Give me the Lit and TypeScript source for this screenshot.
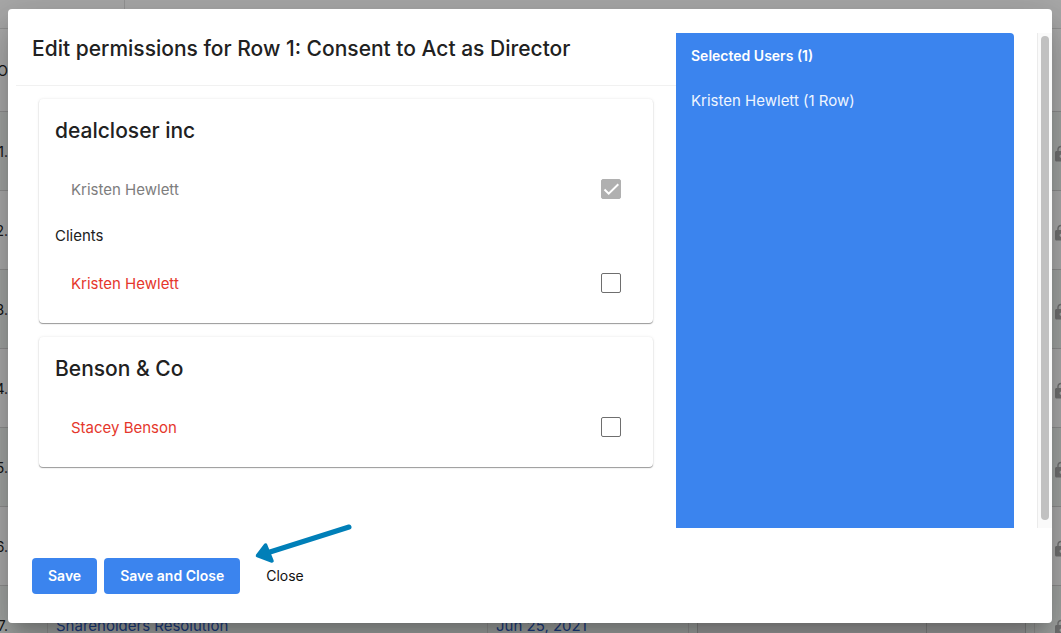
import { LitElement, html, css, svg } from "lit";
import { customElement, property } from "lit/decorators.js";

const lockIcon = html`<svg class="lock" viewBox="0 0 24 24" aria-hidden="true">
  ${svg`<path d="M18 8h-1V6c0-2.76-2.24-5-5-5S7 3.24 7 6v2H6c-1.1 0-2 .9-2 2v10c0 1.1.9 2 2 2h12c1.1 0 2-.9 2-2V10c0-1.1-.9-2-2-2zm-6 9c-1.1 0-2-.9-2-2s.9-2 2-2 2 .9 2 2-.9 2-2 2zm3.1-9H8.9V6c0-1.71 1.39-3.1 3.1-3.1s3.1 1.39 3.1 3.1v2z"/>`}
</svg>`;

interface Doc {
  name: string;
  date: string;
}

@customElement("document-list")
class DocumentList extends LitElement {
  @property({ attribute: false }) docs: Doc[] = [];

  static styles = css`
    :host {
      display: block;
      height: 100%;
      overflow: hidden;
      color: #222;
    }
    .tabs {
      height: 28px;
      border-bottom: 1px solid #dcdcdc;
      background: #fafafa;
    }
    .tab {
      width: 124px;
      height: 26px;
      border-right: 1px solid #dcdcdc;
      border-radius: 0 0 4px 0;
    }
    .docs {
      width: 100%;
      table-layout: fixed;
      border-collapse: separate;
      border-spacing: 0;
      font-size: 14px;
    }
    .docs th,
    .docs td {
      box-sizing: border-box;
      height: 79px;
      padding: 0 8px;
      border-bottom: 1px solid #d4d4d4;
      border-right: 1px solid #dcdcdc;
      text-align: left;
      font-weight: 400;
      white-space: nowrap;
    }
    .docs th {
      height: 83px;
    }
    .docs tbody tr:nth-child(odd) {
      background: #f2f6f4;
    }
    .docs .num {
      width: 48px;
      padding: 0 40px 0 0;
      direction: rtl;
    }
    .docs .num span {
      unicode-bidi: isolate;
      direction: ltr;
    }
    .docs .name {
      width: 440px;
    }
    .docs .date {
      width: 201px;
    }
    .docs .name,
    .docs .date {
      font-size: 15px;
    }
    .docs .lockcell {
      width: 26px;
      padding: 5px 0 0 17px;
      border-right: 0;
    }
    .link {
      color: #2c5cc5;
      text-decoration: none;
    }
    .files {
      display: flex;
      height: 64px;
      border: 1px solid #c8c8c8;
      background: #ececec;
    }
    .file {
      flex: 1;
      margin-right: 98px;
      border-right: 1px solid #c8c8c8;
    }
    .lock {
      display: block;
      width: 18px;
      height: 18px;
      fill: #aaa;
    }
  `;

  render() {
    return html`
      <div class="tabs"><div class="tab"></div></div>
      <table class="docs">
        <thead>
          <tr>
            <th class="num"><span>O</span></th>
            <th class="name"></th>
            <th class="date"></th>
            <th></th>
            <th class="lockcell"></th>
          </tr>
        </thead>
        <tbody>
          ${this.docs.map(
            (doc, i) => html`<tr>
              <td class="num"><span>${i + 1}.</span></td>
              <td class="name"><a class="link" href="#">${doc.name}</a></td>
              <td class="date"><a class="link" href="#">${doc.date}</a></td>
              <td>${doc.name ? html`<div class="files"><div class="file"></div></div>` : ""}</td>
              <td class="lockcell">${lockIcon}</td>
            </tr>`
          )}
        </tbody>
      </table>
    `;
  }
}

interface Member {
  id: string;
  name: string;
  checked?: boolean;
  disabled?: boolean;
}

@customElement("permission-row")
class PermissionRow extends LitElement {
  @property({ attribute: false }) member!: Member;

  static styles = css`
    :host {
      display: block;
    }
    .row {
      display: flex;
      align-items: center;
      justify-content: space-between;
      height: 46px;
      padding: 0 16px;
      color: #e5372c;
      font-size: 15px;
    }
    .row.disabled {
      color: #7d7d7d;
    }
    .wrap {
      display: grid;
      place-items: center;
    }
    .wrap > * {
      grid-area: 1 / 1;
    }
    .box {
      appearance: none;
      box-sizing: border-box;
      width: 20px;
      height: 20px;
      margin: 0;
      border: 1px solid #6e6e6e;
      border-radius: 2px;
      background: #fff;
    }
    .box:disabled {
      border-color: #b0b0b0;
      background: #b0b0b0;
    }
    .tick {
      width: 20px;
      height: 20px;
      fill: none;
      stroke: #fff;
      stroke-width: 2;
      pointer-events: none;
    }
  `;

  render() {
    const m = this.member;
    return html`<div class="row ${m.disabled ? "disabled" : ""}">
      <label for=${m.id}>${m.name}</label>
      <span class="wrap">
        <input class="box" id=${m.id} type="checkbox" .checked=${!!m.checked} ?disabled=${m.disabled} />
        ${m.checked
          ? html`<svg class="tick" viewBox="0 0 20 20" aria-hidden="true"><path d="M3.500 10.500l4.200 4.200L17.300 5.200" /></svg>`
          : ""}
      </span>
    </div>`;
  }
}

@customElement("permissions-dialog")
class PermissionsDialog extends LitElement {
  static styles = css`
    :host {
      display: flex;
      flex: 1;
      min-width: 0;
    }
    .dialog {
      display: flex;
      flex-direction: column;
      flex: 1;
      min-width: 0;
      border-radius: 4px;
      background: #fff;
      color: #212121;
      box-shadow:
        0 11px 15px -7px rgba(0, 0, 0, 0.2),
        0 24px 38px 3px rgba(0, 0, 0, 0.14),
        0 9px 46px 8px rgba(0, 0, 0, 0.12);
    }
    .body {
      display: flex;
      flex: 1;
      min-height: 0;
      padding: 24px 0 0 8px;
    }
    .main {
      flex: 1;
      min-width: 0;
    }
    .title {
      margin: 0;
      padding: 0 16px 20px;
      border-bottom: 1px solid #f1f1f1;
      font-size: 21px;
      line-height: 32px;
      font-weight: 500;
    }
    .cards {
      display: flex;
      flex-direction: column;
      gap: 14px;
      padding: 13px 23px 0;
    }
    .card {
      padding: 16px 16px 17px;
      border-radius: 4px;
      box-shadow:
        0 1px 1px rgba(0, 0, 0, 0.38),
        0 0 3px rgba(0, 0, 0, 0.1);
    }
    .org {
      margin: 0 0 19px;
      font-size: 21px;
      line-height: 32px;
      font-weight: 500;
    }
    .group {
      margin: 0;
      font-size: 15px;
      line-height: 48px;
      font-weight: 400;
    }
    .side {
      flex: 0 1 338px;
      box-sizing: border-box;
      padding: 12px 15px;
      border-radius: 0 4px 0 0;
      background: #3b84ee;
      color: #fff;
      font-size: 15px;
      line-height: 22px;
    }
    .sidetitle {
      margin: 0 0 23px;
      font-size: 14px;
      line-height: 22px;
      font-weight: 600;
    }
    .users {
      margin: 0;
      padding: 0;
      list-style: none;
      color: #eef5ff;
    }
    .track {
      box-sizing: border-box;
      flex: 0 0 15px;
      display: flex;
      margin-left: 23px;
      padding: 3px 3px 8px;
      border-left: 1px solid #ebebeb;
      background: #fafafa;
    }
    .thumb {
      flex: 1;
      border-radius: 4px;
      background: #c1c1c1;
    }
    .actions {
      position: relative;
      display: flex;
      gap: 7px;
      padding: 30px 24px 29px;
    }
    .btn {
      height: 36px;
      padding: 0 19px;
      border: 0;
      border-radius: 4px;
      background: none;
      color: #111;
      font: 400 14px/36px Inter, sans-serif;
    }
    .primary {
      padding: 0 16px;
      background: #3b84ee;
      color: #fff;
      font-weight: 600;
    }
    .arrow {
      position: absolute;
      left: 246px;
      top: -6px;
      width: 100px;
      height: 44px;
      pointer-events: none;
    }
  `;

  render() {
    return html`<div class="dialog" role="dialog" aria-labelledby="title">
      <div class="body">
        <div class="main">
          <h2 class="title" id="title">Edit permissions for Row 1: Consent to Act as Director</h2>
          <div class="cards">
            <section class="card">
              <h3 class="org">dealcloser inc</h3>
              <permission-row
                .member=${{ id: "kristen", name: "Kristen Hewlett", checked: true, disabled: true }}
              ></permission-row>
              <h4 class="group">Clients</h4>
              <permission-row .member=${{ id: "kristen-client", name: "Kristen Hewlett" }}></permission-row>
            </section>
            <section class="card">
              <h3 class="org">Benson &amp; Co</h3>
              <permission-row .member=${{ id: "stacey", name: "Stacey Benson" }}></permission-row>
            </section>
          </div>
        </div>
        <aside class="side">
          <h3 class="sidetitle">Selected Users (1)</h3>
          <ul class="users">
            <li>Kristen Hewlett (1 Row)</li>
          </ul>
        </aside>
        <div class="track"><div class="thumb"></div></div>
      </div>
      <div class="actions">
        <button class="btn primary">Save</button>
        <button class="btn primary">Save and Close</button>
        <button class="btn">Close</button>
        <svg class="arrow" viewBox="0 0 100 44" aria-hidden="true">
          <path d="M95 5L16 30" fill="none" stroke="#007fb8" stroke-width="5" stroke-linecap="round" />
          <path
            d="M3.500 33.500L11.500 23L18 39Z"
            fill="#007fb8"
            stroke="#007fb8"
            stroke-width="3.500"
            stroke-linejoin="round"
          />
        </svg>
      </div>
    </div>`;
  }
}

@customElement("app-root")
class AppRoot extends LitElement {
  static styles = css`
    :host {
      display: grid;
      height: 100vh;
      overflow: hidden;
      background: #fff;
      font-family: Inter, sans-serif;
    }
    .page,
    .overlay {
      grid-area: 1 / 1;
      min-width: 0;
      min-height: 0;
    }
    .overlay {
      display: flex;
      z-index: 1;
      padding: 9px 9px 10px 8px;
      background: rgba(0, 0, 0, 0.32);
    }
  `;

  private docs: Doc[] = [
    ...Array.from({ length: 6 }, () => ({ name: "", date: "" })),
    { name: "Shareholders Resolution", date: "Jun 25, 2021" },
  ];

  render() {
    return html`
      <document-list class="page" .docs=${this.docs}></document-list>
      <div class="overlay"><permissions-dialog></permissions-dialog></div>
    `;
  }
}
